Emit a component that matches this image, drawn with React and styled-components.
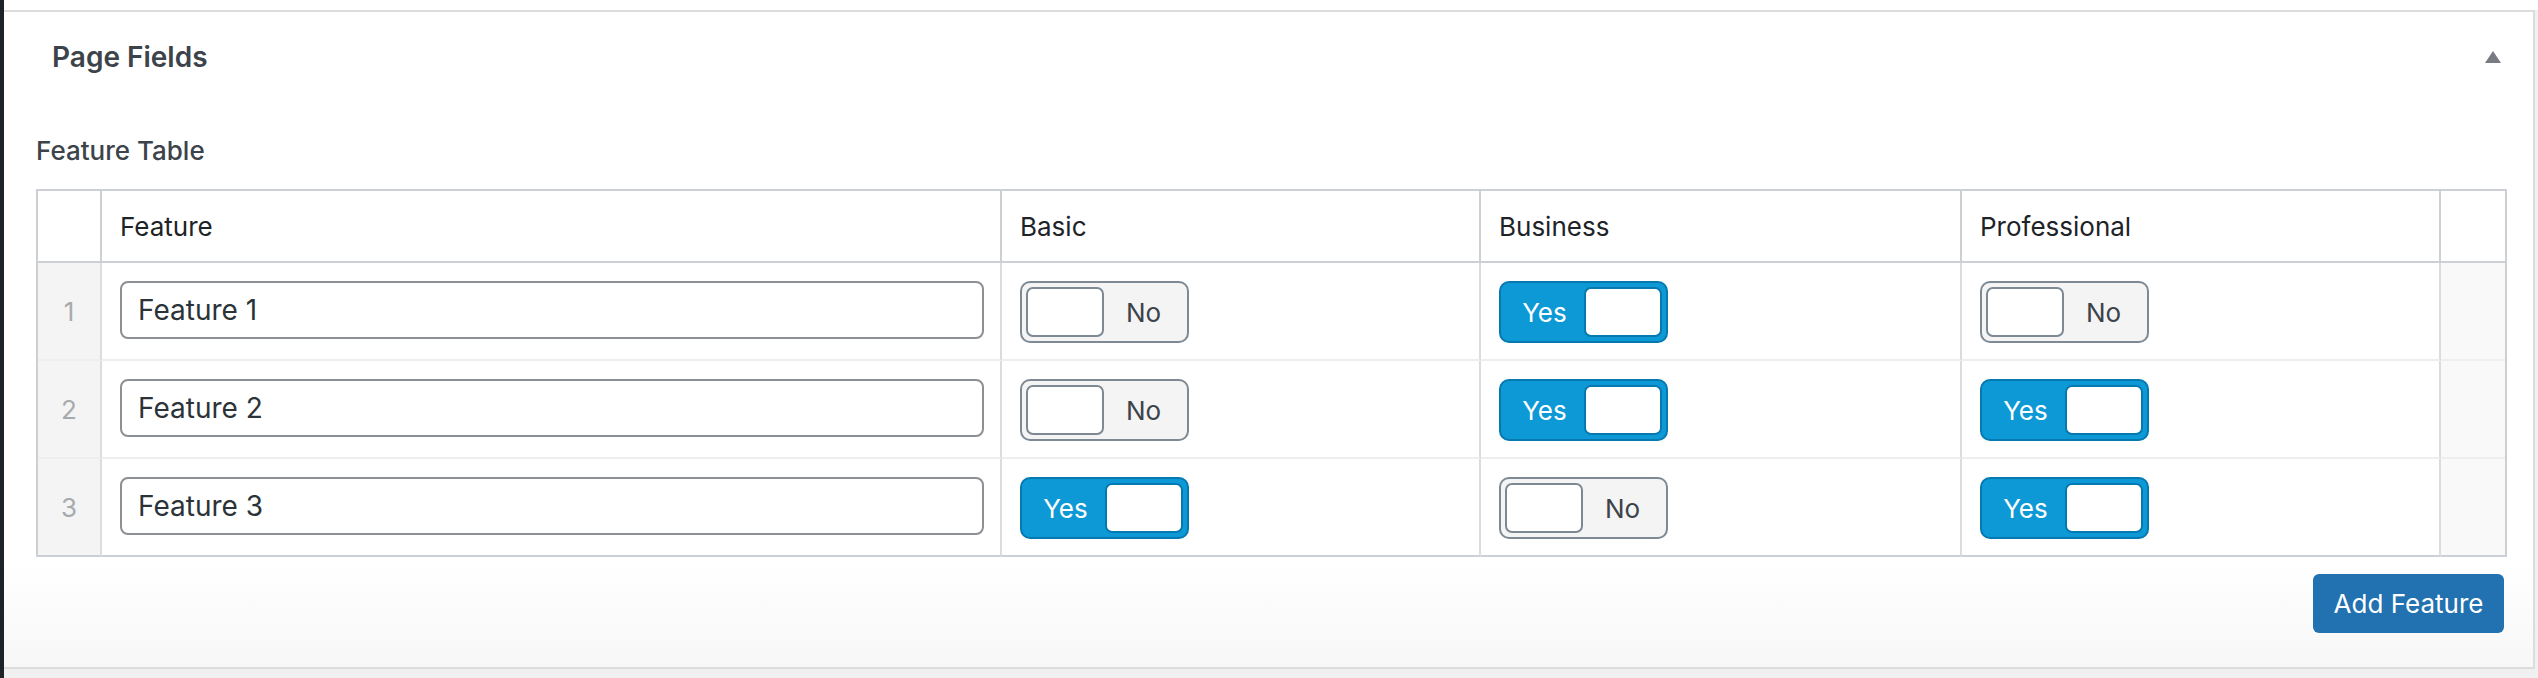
import React, { useState } from 'react';
import styled, { createGlobalStyle } from 'styled-components';

const Global = createGlobalStyle`
  html, body {
    margin: 0;
    padding: 0;
    background: #ffffff;
  }
  * { box-sizing: border-box; }
  body {
    font-family: Inter, "Noto Sans", "Liberation Sans", sans-serif;
    color: #2c3338;
  }
`;

const Page = styled.div`
  display: flex;
  height: 678px;
  width: 2538px;
`;

const AdminEdge = styled.div`
  width: 4px;
  background: #1d2327;
`;

const Main = styled.div`
  flex: 1;
  display: flex;
  flex-direction: column;
  background: #f0f0f1;
`;

const TopGap = styled.div`
  height: 10px;
  background: #ffffff;
`;

const Postbox = styled.section`
  margin-right: 3px;
  border-top: 2px solid #dcdcde;
  border-right: 2px solid #dcdcde;
  border-bottom: 2px solid #dcdcde;
  background: linear-gradient(to bottom, #ffffff 0, #ffffff 84%, #f7f7f7 100%);
`;

const BoxHeader = styled.div`
  height: 90px;
  display: flex;
  align-items: center;
  justify-content: space-between;
  padding: 0 32px 0 48px;
`;

const BoxTitle = styled.h2`
  margin: 0;
  font-size: 28px;
  font-weight: 600;
  color: #3c434a;
`;

const Inside = styled.div`
  padding: 31px 26px 34px 32px;
`;

const FieldLabel = styled.div`
  font-size: 26px;
  line-height: 36px;
  font-weight: 500;
  color: #3c434a;
  margin-bottom: 20px;
`;

const Grid = styled.div`
  display: grid;
  grid-template-columns: 64px 900px 479px 481px 479px 1fr;
  border-top: 2px solid #ccd0d4;
  border-left: 2px solid #ccd0d4;
  border-right: 2px solid #ccd0d4;
`;

const HeadCell = styled.div`
  height: 72px;
  display: flex;
  align-items: center;
  padding: 0 16px 0 18px;
  font-size: 26px;
  color: #1d2327;
  background: #ffffff;
  border-bottom: 2px solid #ccd0d4;
  border-right: ${(p) => (p.$end ? 'none' : '2px solid #ccd0d4')};
`;

const Cell = styled.div`
  height: 98px;
  padding: 18px 16px 0 18px;
  background: ${(p) => p.$bg || '#ffffff'};
  border-bottom: 2px solid ${(p) => (p.$last ? '#ccd0d4' : '#eeeeee')};
  border-right: ${(p) => (p.$end ? 'none' : '2px solid #dcdcde')};
`;

const NumCell = styled(Cell)`
  padding: 0;
  display: flex;
  align-items: center;
  justify-content: center;
  font-size: 26px;
  color: #a7aaad;
  background: #f4f4f4;
`;

const TextInput = styled.input`
  display: block;
  width: 100%;
  height: 58px;
  margin: 0;
  padding: 0 16px;
  border: 2px solid #8c8f94;
  border-radius: 8px;
  background: #ffffff;
  font-family: inherit;
  font-size: 28px;
  color: #2c3338;
  outline: none;
`;

const Switch = styled.div`
  width: 169px;
  height: 62px;
  padding: 4px;
  display: flex;
  flex-direction: ${(p) => (p.$on ? 'row' : 'row-reverse')};
  border: 2px solid ${(p) => (p.$on ? '#0679b0' : '#7e8993')};
  border-radius: 10px;
  background: ${(p) => (p.$on ? '#0c99d5' : '#f4f4f4')};
  cursor: pointer;
  user-select: none;
`;

const SwitchText = styled.span`
  flex: 1;
  display: flex;
  align-items: center;
  justify-content: center;
  font-size: 26px;
  color: ${(p) => (p.$on ? '#ffffff' : '#3c434a')};
`;

const Knob = styled.span`
  width: 78px;
  height: 50px;
  background: #ffffff;
  border: 2px solid ${(p) => (p.$on ? '#0679b0' : '#7e8993')};
  border-radius: 7px;
`;

const Actions = styled.div`
  display: flex;
  justify-content: flex-end;
  margin-top: 17px;
  padding-right: 3px;
`;

const PrimaryButton = styled.button`
  width: 191px;
  height: 59px;
  border: none;
  border-radius: 6px;
  background: #2271b1;
  color: #ffffff;
  font-family: inherit;
  font-size: 26px;
  cursor: pointer;
`;

function Toggle({ on, onClick }) {
  return (
    <Switch $on={on} onClick={onClick}>
      <SwitchText $on={on}>{on ? 'Yes' : 'No'}</SwitchText>
      <Knob $on={on} />
    </Switch>
  );
}

const initialRows = [
  { name: 'Feature 1', basic: false, business: true, professional: false },
  { name: 'Feature 2', basic: false, business: true, professional: true },
  { name: 'Feature 3', basic: true, business: false, professional: true },
];

const plans = ['basic', 'business', 'professional'];

function App() {
  const [rows, setRows] = useState(initialRows);

  const flip = (i, plan) => {
    setRows(rows.map((r, j) => (j === i ? { ...r, [plan]: !r[plan] } : r)));
  };

  const rename = (i, value) => {
    setRows(rows.map((r, j) => (j === i ? { ...r, name: value } : r)));
  };

  return (
    <Page>
      <Global />
      <AdminEdge />
      <Main>
        <TopGap />
        <Postbox>
          <BoxHeader>
            <BoxTitle>Page Fields</BoxTitle>
            <svg width="16" height="12" viewBox="0 0 16 12">
              <polygon points="8,0 16,12 0,12" fill="#787c82" />
            </svg>
          </BoxHeader>
          <Inside>
            <FieldLabel>Feature Table</FieldLabel>
            <Grid>
              <HeadCell />
              <HeadCell>Feature</HeadCell>
              <HeadCell>Basic</HeadCell>
              <HeadCell>Business</HeadCell>
              <HeadCell>Professional</HeadCell>
              <HeadCell $end />
              {rows.map((row, i) => {
                const last = i === rows.length - 1;
                return (
                  <React.Fragment key={i}>
                    <NumCell $last={last}>{i + 1}</NumCell>
                    <Cell $last={last}>
                      <TextInput value={row.name} onChange={(e) => rename(i, e.target.value)} />
                    </Cell>
                    {plans.map((plan) => (
                      <Cell key={plan} $last={last}>
                        <Toggle on={row[plan]} onClick={() => flip(i, plan)} />
                      </Cell>
                    ))}
                    <Cell $last={last} $end $bg="#f9f9f9" />
                  </React.Fragment>
                );
              })}
            </Grid>
            <Actions>
              <PrimaryButton>Add Feature</PrimaryButton>
            </Actions>
          </Inside>
        </Postbox>
      </Main>
    </Page>
  );
}

export default App;
